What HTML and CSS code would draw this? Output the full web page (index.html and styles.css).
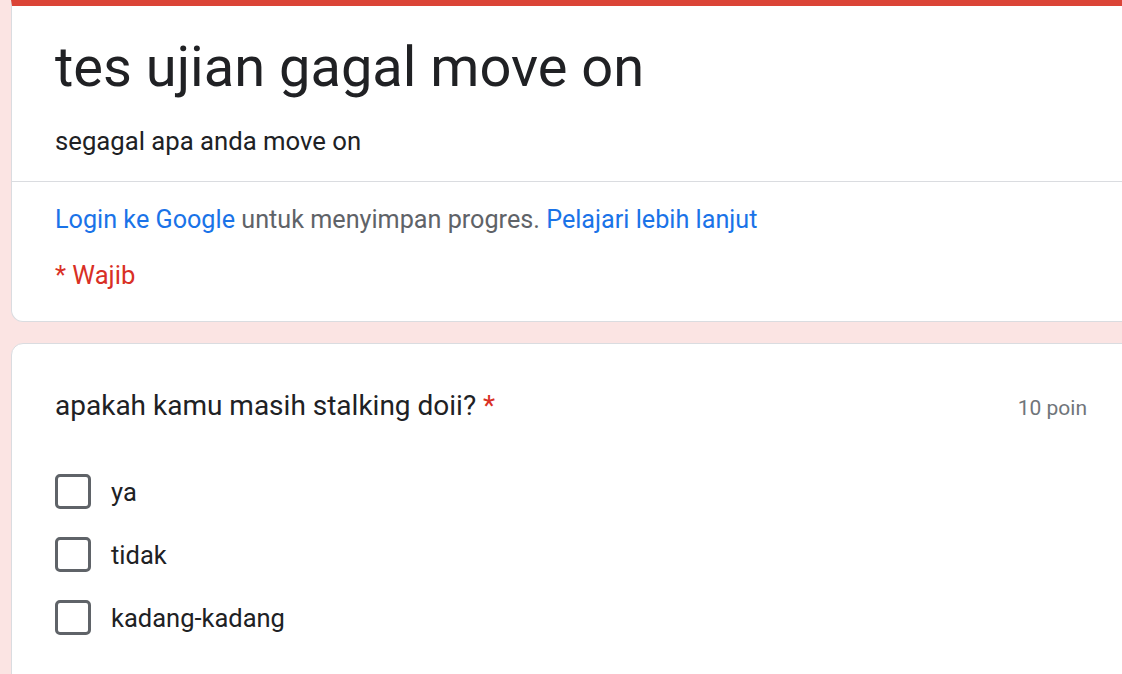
FILE: index.html
```html
<!DOCTYPE html>
<html lang="id">
<head>
<meta charset="utf-8">
<title>tes ujian gagal move on</title>
<link rel="stylesheet" href="styles.css">
</head>
<body>
<div class="page">
  <section class="card header-card">
    <div class="header-top">
      <h1 class="title">tes ujian gagal move on</h1>
      <p class="desc">segagal apa anda move on</p>
    </div>
    <div class="header-bottom">
      <p class="login"><a class="link" href="#">Login ke Google</a> untuk menyimpan progres. <a class="link" href="#">Pelajari lebih lanjut</a></p>
      <p class="required">* Wajib</p>
    </div>
  </section>
  <section class="card question-card">
    <div class="q-head">
      <div class="q-title">apakah kamu masih stalking doii? <span class="star">*</span></div>
      <div class="q-points">10 poin</div>
    </div>
    <div class="options">
      <label class="option"><span class="box"></span><span class="opt-text">ya</span></label>
      <label class="option"><span class="box"></span><span class="opt-text">tidak</span></label>
      <label class="option"><span class="box"></span><span class="opt-text">kadang-kadang</span></label>
    </div>
  </section>
</div>
</body>
</html>
```
FILE: styles.css
```css
html, body {
  margin: 0;
  padding: 0;
  background: #fbe4e3;
  overflow: hidden;
}
body {
  font-family: Roboto, "Liberation Sans", Arial, sans-serif;
  width: 1122px;
  height: 674px;
}
.page {
  padding-left: 11px;
  width: 1160px;
  display: flex;
  flex-direction: column;
  gap: 21px;
}
.card {
  background: #fff;
  border: 1px solid #dadce0;
  border-radius: 12px;
}
.header-card {
  border-top: 6px solid #db4437;
  border-radius: 0 0 12px 12px;
}
.header-top {
  padding: 25px 43px 23px;
  border-bottom: 1px solid #dadce0;
}
.title {
  margin: 0;
  font-size: 56px;
  font-weight: 400;
  line-height: 72px;
  color: #202124;
}
.desc {
  margin: 21px 0 0;
  font-size: 25.7px;
  line-height: 34px;
  color: #202124;
}
.header-bottom {
  padding: 20px 43px 28px;
}
.login {
  margin: 0;
  font-size: 25.2px;
  line-height: 36px;
  color: #5f6368;
}
.link {
  color: #1a73e8;
  text-decoration: none;
}
.required {
  margin: 19px 0 0;
  font-size: 25.6px;
  line-height: 36px;
  color: #d93025;
}
.question-card {
  padding: 44px 34px 30px 43px;
  min-height: 400px;
}
.q-head {
  display: flex;
  justify-content: space-between;
  align-items: baseline;
  width: 1032px;
}
.q-title {
  font-size: 28px;
  line-height: 36px;
  color: #202124;
}
.star {
  color: #d93025;
}
.q-points {
  font-size: 21px;
  color: #70757a;
}
.options {
  margin-top: 50px;
  display: flex;
  flex-direction: column;
  gap: 28px;
}
.option {
  display: flex;
  align-items: center;
  gap: 20px;
  height: 35px;
}
.box {
  box-sizing: border-box;
  width: 36px;
  height: 35px;
  border: 3px solid #5f6368;
  border-radius: 5px;
}
.opt-text {
  font-size: 25.5px;
  color: #202124;
}
```
